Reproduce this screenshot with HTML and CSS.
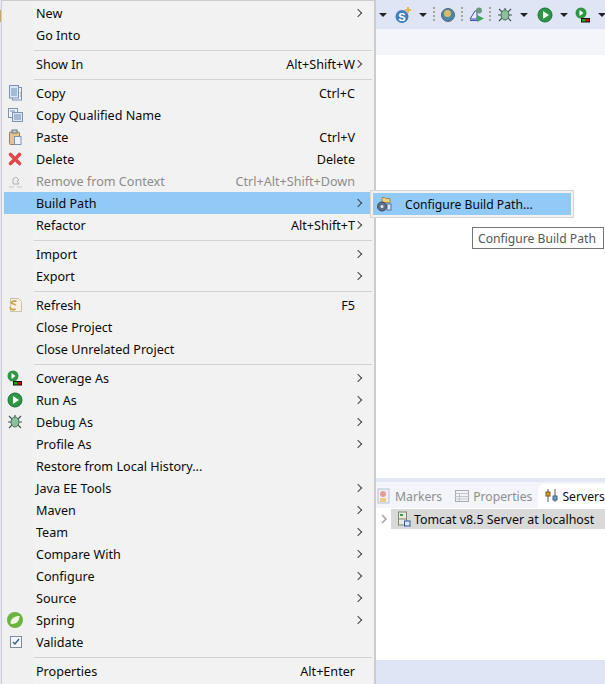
FILE: index.html
```html
<!DOCTYPE html>
<html lang="en">
<head>
<meta charset="utf-8">
<title>Eclipse context menu</title>
<link rel="stylesheet" href="styles.css">
</head>
<body>
<div class="app">
  <div class="toolbar">
    <span class="caret"></span>
    <svg class="tb s m7" viewBox="0 0 18 18"><circle cx="8" cy="10.500" r="6.500" fill="#3f7fc0"/><text x="8" y="14.500" font-size="11" font-weight="700" fill="#fff" text-anchor="middle" font-family="Liberation Sans">S</text><path d="M14 1v6M11 4h6" stroke="#e6b84c" stroke-width="2"/></svg>
    <span class="caret m7"></span>
    <span class="grip m6"></span>
    <svg class="tb m5" viewBox="0 0 16 16"><circle cx="8" cy="8" r="6.500" fill="#4d86a8" stroke="#56687a"/><circle cx="7.500" cy="6.500" r="3.500" fill="#d8c060"/></svg>
    <span class="grip m5"></span>
    <svg class="tb m6" viewBox="0 0 16 16"><path d="M1 12 6 4h2v8z" fill="#e6ecf8" stroke="#3a4ea0"/><path d="M1 13.500h7" stroke="#3a4ea0"/><circle cx="10" cy="3.500" r="3" fill="#6d9a80"/><path d="M8 8l7 3.500L8 15z" fill="#3fa35a"/></svg>
    <span class="grip m4"></span>
    <svg class="tb m6" viewBox="0 0 16 16"><path d="M2 2l12 12M14 2 2 14M1 8h14M8 1v2" stroke="#3d5a50" stroke-width="1.200"/><ellipse cx="8" cy="8" rx="4" ry="5" fill="#8fbf9a" stroke="#4a6a58"/></svg>
    <span class="caret m7"></span>
    <svg class="tb m9" viewBox="0 0 16 16"><circle cx="8" cy="8" r="7" fill="#2f9648" stroke="#1c6e34"/><path d="M6 4l6 4-6 4z" fill="#f3f8f0"/></svg>
    <span class="caret m7"></span>
    <svg class="tb m7" viewBox="0 0 16 16"><circle cx="6" cy="6" r="5.500" fill="#2f9648"/><path d="M4.500 3l4 3-4 3z" fill="#fff"/><rect x="6" y="11" width="9" height="4.500" fill="#111"/><rect x="7" y="12" width="3.500" height="2.500" fill="#0b0"/><rect x="10.500" y="12" width="3.500" height="2.500" fill="#d00"/></svg>
    <span class="caret m7"></span>
  </div>
  <div class="band"></div>
  <div class="editor"></div>
  <div class="rule"></div>
  <div class="tabs">
    <div class="tab muted">
      <svg class="ic" viewBox="0 0 16 16"><rect x="2" y="1" width="11" height="14" fill="#eef0f6" stroke="#b9c0d0"/><circle cx="7" cy="6" r="3" fill="#e59a9a"/><rect x="4" y="10" width="6" height="4" fill="#eccb85"/></svg>
      <span>Markers</span>
    </div>
    <div class="tab muted">
      <svg class="ic" viewBox="0 0 16 16"><rect x="1.500" y="2.500" width="13" height="11" fill="#f2f3f7" stroke="#a6abb5"/><path d="M1.500 5.500h13M1.500 8.500h13M1.500 11h13M5.500 5v8" stroke="#c0c4cc"/></svg>
      <span>Properties</span>
    </div>
    <div class="tab active">
      <svg class="ic" viewBox="0 0 16 16"><path d="M4 1v13M11 1v13" stroke="#555"/><rect x="2" y="4" width="4" height="4" fill="#d8a030" stroke="#7a5a20"/><rect x="9" y="8" width="4" height="4" fill="#6aa0d0" stroke="#406080"/></svg>
      <span>Servers</span>
    </div>
  </div>
  <div class="tree">
    <svg class="twist" viewBox="0 0 8 10"><path d="M2 1l4 4-4 4" fill="none" stroke="#a3a3a3" stroke-width="1.500"/></svg>
    <div class="node">
      <svg class="ic" viewBox="0 0 16 16"><rect x="1.500" y="1" width="8" height="13" fill="#e8eadd" stroke="#7c8a6a"/><rect x="3" y="3" width="3" height="2" fill="#3a9a50"/><path d="M2 8h7" stroke="#7c8a6a"/><rect x="7.500" y="10" width="5.500" height="5" fill="#dfe8f5" stroke="#2b5a9c"/></svg>
      <span>Tomcat v8.5 Server at localhost</span>
    </div>
  </div>
  <div class="fill"></div>
  <div class="status"></div>
</div>

<div class="menu">
  <div class="item"><span class="label">New</span><span class="arrow"></span></div>
  <div class="item"><span class="label">Go Into</span></div>
  <div class="sep"></div>
  <div class="item"><span class="label">Show In</span><span class="key">Alt+Shift+W</span><span class="arrow"></span></div>
  <div class="sep"></div>
  <div class="item">
    <svg class="icon" viewBox="0 0 16 16"><rect x="5.500" y="2.500" width="9" height="12.500" fill="#eef3fb" stroke="#7d93ad"/><rect x="2.500" y="0.500" width="9" height="12.500" fill="#dbe7f6" stroke="#7d93ad"/><path d="M4 4h6M4 6h6M4 8h6M4 10h6M13 8h1M13 11h1" stroke="#6c8cb4"/></svg>
    <span class="label">Copy</span><span class="key">Ctrl+C</span>
  </div>
  <div class="item">
    <svg class="icon" viewBox="0 0 16 16"><rect x="1.500" y="1.500" width="9" height="9" fill="#eef3fb" stroke="#7d93ad"/><rect x="5.500" y="5.500" width="10" height="9" fill="#dbe7f6" stroke="#7d93ad"/><path d="M7 8h7M7 10h7M7 12h7M3 4h5" stroke="#6c8cb4"/></svg>
    <span class="label">Copy Qualified Name</span>
  </div>
  <div class="item">
    <svg class="icon" viewBox="0 0 16 16"><rect x="2.500" y="3" width="10" height="12.500" rx="1" fill="#e6c58c" stroke="#98805a"/><rect x="5" y="1" width="5" height="3" fill="#c7ccd4" stroke="#6e7680"/><rect x="7.500" y="7.500" width="6.500" height="8" fill="#eef3fb" stroke="#7d93ad"/></svg>
    <span class="label">Paste</span><span class="key">Ctrl+V</span>
  </div>
  <div class="item">
    <svg class="icon" viewBox="0 0 16 16"><path d="M3.500 3.500l9 9M12.500 3.500l-9 9" stroke="#dc4a4a" stroke-width="3.600" stroke-linecap="round"/></svg>
    <span class="label">Delete</span><span class="key">Delete</span>
  </div>
  <div class="item disabled">
    <svg class="icon" viewBox="0 0 16 16"><path d="M2 14h5M10 14h5" stroke="#c4c4c4"/><path d="M6 11V6l3-2 3 3-2 1 2 3H9z" fill="none" stroke="#b0b0b0"/></svg>
    <span class="label">Remove from Context</span><span class="key">Ctrl+Alt+Shift+Down</span>
  </div>
  <div class="item selected"><span class="label">Build Path</span><span class="arrow"></span></div>
  <div class="item"><span class="label">Refactor</span><span class="key">Alt+Shift+T</span><span class="arrow"></span></div>
  <div class="sep"></div>
  <div class="item"><span class="label">Import</span><span class="arrow"></span></div>
  <div class="item"><span class="label">Export</span><span class="arrow"></span></div>
  <div class="sep"></div>
  <div class="item">
    <svg class="icon" viewBox="0 0 16 16"><path d="M3.500 1.500h8l3 3v10h-11z" fill="#f6f1e2" stroke="#c8c2ae"/><path d="M9.500 4.500a3 2 0 0 0-5 1c0 2 4 1 4 3M3.500 10a3 2 0 0 0 5 2" fill="none" stroke="#d2a040" stroke-width="1.800"/></svg>
    <span class="label">Refresh</span><span class="key">F5</span>
  </div>
  <div class="item"><span class="label">Close Project</span></div>
  <div class="item"><span class="label">Close Unrelated Project</span></div>
  <div class="sep"></div>
  <div class="item">
    <svg class="icon" viewBox="0 0 16 16"><circle cx="6" cy="6" r="5.500" fill="#2f9648"/><path d="M4.500 3l4 3-4 3z" fill="#fff"/><rect x="6" y="11" width="9" height="4.500" fill="#111"/><rect x="7" y="12" width="3.500" height="2.500" fill="#0b0"/><rect x="10.500" y="12" width="3.500" height="2.500" fill="#d00"/></svg>
    <span class="label">Coverage As</span><span class="arrow"></span>
  </div>
  <div class="item">
    <svg class="icon" viewBox="0 0 16 16"><circle cx="8" cy="8" r="7" fill="#2f9648" stroke="#1c6e34"/><path d="M6 4l6 4-6 4z" fill="#f3f8f0"/></svg>
    <span class="label">Run As</span><span class="arrow"></span>
  </div>
  <div class="item">
    <svg class="icon" viewBox="0 0 16 16"><path d="M2 2l12 12M14 2 2 14M1 8h14M8 1v2" stroke="#3d5a50" stroke-width="1.200"/><ellipse cx="8" cy="8" rx="4" ry="5" fill="#8fbf9a" stroke="#4a6a58"/></svg>
    <span class="label">Debug As</span><span class="arrow"></span>
  </div>
  <div class="item"><span class="label">Profile As</span><span class="arrow"></span></div>
  <div class="item"><span class="label">Restore from Local History...</span></div>
  <div class="item"><span class="label">Java EE Tools</span><span class="arrow"></span></div>
  <div class="item"><span class="label">Maven</span><span class="arrow"></span></div>
  <div class="item"><span class="label">Team</span><span class="arrow"></span></div>
  <div class="item"><span class="label">Compare With</span><span class="arrow"></span></div>
  <div class="item"><span class="label">Configure</span><span class="arrow"></span></div>
  <div class="item"><span class="label">Source</span><span class="arrow"></span></div>
  <div class="item">
    <svg class="icon" viewBox="0 0 16 16"><circle cx="8" cy="8" r="8" fill="#6cb33f"/><path d="M3.500 11.500C3.500 6 8 4 12.500 4c0 5-3 8-7.500 8" fill="#f0f6e6"/></svg>
    <span class="label">Spring</span><span class="arrow"></span>
  </div>
  <div class="item">
    <svg class="icon" viewBox="0 0 16 16"><rect x="3.500" y="2.500" width="11" height="11" fill="#f4f6fa" stroke="#7d8ba8"/><path d="M6 8l2 2 4-5" fill="none" stroke="#41618f" stroke-width="1.500"/></svg>
    <span class="label">Validate</span>
  </div>
  <div class="sep"></div>
  <div class="item"><span class="label">Properties</span><span class="key">Alt+Enter</span></div>
</div>

<div class="submenu">
  <div class="subitem">
    <svg class="icon" viewBox="0 0 16 16"><path d="M6 1.500h3l1 1h4v4H6z" fill="#f0cf78" stroke="#a08a50"/><rect x="11" y="8" width="4" height="6" fill="#dbe7f6" stroke="#56729a"/><circle cx="6" cy="10.500" r="4.500" fill="#5f7188" stroke="#39485c"/><circle cx="6" cy="10.500" r="1.500" fill="#e4e8ee"/></svg>
    <span>Configure Build Path...</span>
  </div>
</div>

<div class="tooltip">Configure Build Path</div>
</body>
</html>
```
FILE: styles.css
```css
* { box-sizing: border-box; }
html, body { margin: 0; padding: 0; height: 100%; overflow: hidden; }
body {
  width: 605px;
  height: 684px;
  position: relative;
  background: #fff;
  font-family: "Noto Sans", "Open Sans", sans-serif;
  font-size: 12.6px;
  color: #0a0a0a;
}
.app {
  height: 684px; display: flex; flex-direction: column; padding-left: 376px;
  background: linear-gradient(#e4e8f4 0 10px, #c9a860 10px 22px, #e4e8f4 22px) no-repeat 0 0 / 1px 100%;
}
.toolbar {
  height: 29px; flex: none; background: #dfe5f4;
  display: flex; align-items: center; padding-left: 3px; overflow: hidden;
}
.m4 { margin-left: 4px; }
.m5 { margin-left: 5px; }
.m6 { margin-left: 6px; }
.m7 { margin-left: 7px; }
.m9 { margin-left: 9px; }
.caret { width: 0; height: 0; flex: none; border: 4px solid transparent; border-top: 4px solid #222; border-bottom: 0; }
.tb { width: 16px; height: 16px; flex: none; }
.tb.s { width: 18px; height: 18px; }
.grip { width: 2px; height: 16px; flex: none; background: repeating-linear-gradient(#a9a59a 0 2px, transparent 2px 4px); }
.band { height: 26px; flex: none; background: #f3f5fb; }
.editor { height: 423px; flex: none; background: #fff; }
.rule { height: 4px; flex: none; background: #e4e8f6; }
.tabs { height: 26px; flex: none; background: #f3f5fb; display: flex; align-items: center; gap: 12px; font-size: 12.2px; padding-top: 2px; }
.tab { display: flex; align-items: center; gap: 3px; height: 24px; white-space: nowrap; }
.tab.muted { color: #8e8e8e; }
.tab.active { color: #111; background: #fff; padding-left: 6px; flex: 1; margin-left: -6px; border-radius: 6px 0 0 0; overflow: hidden; gap: 2px; }
.ic { width: 16px; height: 16px; flex: none; }
.tree { height: 22px; flex: none; display: flex; align-items: center; padding-left: 4px; gap: 3px; }
.twist { width: 8px; height: 10px; flex: none; }
.node { flex: 1; height: 20px; background: #d9d9d9; display: flex; align-items: center; gap: 1px; padding-left: 6px; white-space: nowrap; font-size: 12.4px; }
.fill { flex: 1; }
.status { height: 24px; flex: none; background: #dfe5f4; }

.menu {
  position: absolute; left: 1px; top: 0; width: 375px; height: 684px;
  background: linear-gradient(90deg, #f0f0f0 31px, #f2f2f2 31px);
  border-top: 1px solid #ccc; border-left: 1px solid #ccc; border-right: 2px solid #ccc;
  padding: 1px 2px 0 2px;
}
.item { height: 22px; display: flex; align-items: center; padding-left: 32px; position: relative; white-space: nowrap; }
.item .label { flex: 1; }
.key { margin-right: 17px; }
.arrow { position: absolute; right: 11px; top: 8px; width: 6px; height: 6px; border-top: 1px solid #444; border-right: 1px solid #444; transform: rotate(45deg); }
.icon { position: absolute; left: 3px; top: 3px; width: 16px; height: 16px; }
.sep { height: 7px; padding: 4px 0 0; margin-left: 30px; }
.sep::before { content: ""; display: block; height: 1px; background: #d2d2d2; }
.selected { background: #91c9f7; }
.disabled { color: #8c8c8c; }

.submenu {
  position: absolute; left: 370px; top: 190px; width: 204px; height: 28px;
  background: #f2f2f2; border: 1px solid #d4d4d4; padding: 2px;
  font-size: 12.15px;
}
.subitem { height: 22px; background: #91c9f7; display: flex; align-items: center; position: relative; padding-left: 32px; white-space: nowrap; }
.subitem .icon { left: 3px; top: 3px; }
.tooltip {
  position: absolute; left: 472px; top: 227px; width: 132px; height: 22px;
  background: #fff; border: 1px solid #767676; color: #575757;
  display: flex; align-items: center; padding-left: 5px; white-space: nowrap;
  font-size: 12.15px;
}
```
